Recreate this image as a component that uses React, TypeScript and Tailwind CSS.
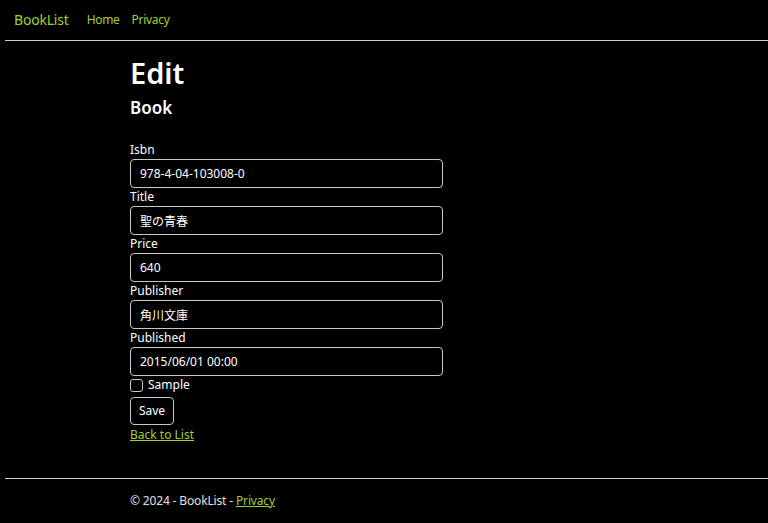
import React from "react";

const fieldCls =
  "block w-[313px] h-[29px] rounded-[4px] border border-[#c8c8c8] bg-black px-[9px] text-[12px] text-white outline-none";

function Field({ label, value }: { label: string; value: string }) {
  return (
    <div className="flex flex-col">
      <label className="h-[18px] text-[12px] leading-[18px] text-white">{label}</label>
      <input className={fieldCls} defaultValue={value} readOnly />
    </div>
  );
}

export default function App() {
  return (
    <div
      className="min-h-[523px] w-full bg-black text-white"
      style={{ fontFamily: '"Noto Sans", "Noto Sans CJK JP", sans-serif' }}
    >
      <nav className="ml-[5px] flex h-[41px] items-center border-b border-[#cfcfcf] pl-[9px]">
        <a className="text-[14px] tracking-[-0.2px] leading-none text-[#a0d02c]">BookList</a>
        <a className="ml-[18px] text-[12px] tracking-[-0.3px] leading-none text-[#a0d02c]">Home</a>
        <a className="ml-[12px] text-[12px] tracking-[-0.3px] leading-none text-[#a0d02c]">Privacy</a>
      </nav>
      <main className="ml-[130px] h-[437px] pt-[15px]">
        <h1 className="text-[29px] font-semibold leading-[34px]">Edit</h1>
        <h4 className="mt-[6px] text-[17px] font-semibold leading-[24px]">Book</h4>
        <form className="mt-[21px] flex flex-col">
          <Field label="Isbn" value="978-4-04-103008-0" />
          <Field label="Title" value="聖の青春" />
          <Field label="Price" value="640" />
          <Field label="Publisher" value="角川文庫" />
          <Field label="Published" value="2015/06/01 00:00" />
          <label className="flex h-[18px] items-center text-[12px]">
            <span className="inline-block h-[13px] w-[13px] rounded-[3px] border border-[#c8c8c8]" />
            <span className="ml-[5px]">Sample</span>
          </label>
          <div className="mt-[3px]">
            <button
              type="button"
              className="h-[28px] w-[44px] rounded-[4px] border border-[#c8c8c8] text-[12px] text-white"
            >
              Save
            </button>
          </div>
          <div className="h-[19px] text-[12px] leading-[19px]">
            <a className="text-[#a0d02c] underline">Back to List</a>
          </div>
        </form>
      </main>
      <footer className="ml-[5px] border-t border-[#cfcfcf]">
        <div className="ml-[125px] h-[44px] pt-[13px] text-[12px] tracking-[-0.15px] leading-[18px] text-[#e0e0e0]">
          © 2024 - BookList - <a className="text-[#a0d02c] underline">Privacy</a>
        </div>
      </footer>
    </div>
  );
}
